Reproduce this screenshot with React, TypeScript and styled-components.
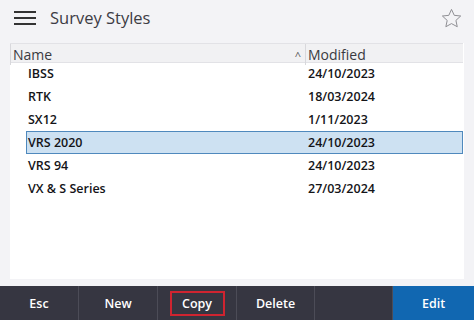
import React from 'react';
import styled, { createGlobalStyle } from 'styled-components';

const rows = [
  { name: 'IBSS', modified: '24/10/2023' },
  { name: 'RTK', modified: '18/03/2024' },
  { name: 'SX12', modified: '1/11/2023' },
  { name: 'VRS 2020', modified: '24/10/2023', selected: true },
  { name: 'VRS 94', modified: '24/10/2023' },
  { name: 'VX & S Series', modified: '27/03/2024' },
];

const buttons = [
  { label: 'Esc' },
  { label: 'New' },
  { label: 'Copy', outlined: true },
  { label: 'Delete' },
  { label: '' },
  { label: 'Edit', primary: true },
];

const App = () => {
  return (
    <>
      <GlobalStyle />
      <Screen>
        <TopBar>
          <MenuButton>
            <svg width="22" height="14" viewBox="0 0 22 14">
              <path d="M0 1h22M0 7h22M0 13h22" stroke="#333" strokeWidth="2" />
            </svg>
          </MenuButton>
          <Title>Survey Styles</Title>
          <StarButton>
            <svg width="23" height="23" viewBox="0 0 24 24" fill="none">
              <path
                d="M12 2.5l2.9 6.2 6.7.7-5 4.6 1.4 6.6L12 17.3l-5.9 3.3 1.4-6.6-5-4.6 6.7-.7z"
                stroke="#8a8a8f"
                strokeWidth="1"
                strokeLinejoin="round"
              />
            </svg>
          </StarButton>
        </TopBar>
        <Table>
          <HeadRow>
            <HeadCell>
              Name
              <Caret>^</Caret>
            </HeadCell>
            <HeadCell>Modified</HeadCell>
          </HeadRow>
          {rows.map((r) => (
            <Row key={r.name} $selected={r.selected}>
              <NameCell>{r.name}</NameCell>
              <DateCell>{r.modified}</DateCell>
            </Row>
          ))}
        </Table>
        <BottomBar>
          {buttons.map((b, i) => (
            <SoftKey key={i} $primary={b.primary}>
              {b.outlined ? <Outline>{b.label}</Outline> : b.label}
            </SoftKey>
          ))}
        </BottomBar>
      </Screen>
    </>
  );
};

export default App;

const GlobalStyle = createGlobalStyle`
  html, body {
    margin: 0;
    padding: 0;
    background: #f3f3f6;
  }
  body {
    font-family: "Open Sans", "Noto Sans", sans-serif;
  }
`;

const Screen = styled.div`
  width: 474px;
  height: 320px;
  display: flex;
  flex-direction: column;
  background: #f3f3f6;
  overflow: hidden;
`;

const TopBar = styled.div`
  height: 38px;
  display: flex;
  align-items: center;
  padding: 0 11px 0 14px;
  box-sizing: border-box;
`;

const MenuButton = styled.div`
  width: 22px;
  height: 14px;
  display: flex;
  margin-top: -2px;
`;

const Title = styled.div`
  margin-left: 14px;
  font-size: 16.5px;
  color: #3c3c44;
  flex: 1;
  margin-top: -3px;
`;

const StarButton = styled.div`
  display: flex;
  margin-top: -2px;
`;

const Table = styled.div`
  margin: 5px 10px 0 10px;
  height: 236px;
  background: #ffffff;
  display: flex;
  flex-direction: column;
`;

const HeadRow = styled.div`
  display: grid;
  grid-template-columns: 295px 1fr;
  height: 20px;
  background: #f1f1f3;
  border-top: 1px solid #e2e2e6;
  border-bottom: 1px solid #e2e2e6;
  box-sizing: border-box;
  margin-right: 1px;
  margin-bottom: -1px;
`;

const HeadCell = styled.div`
  display: flex;
  align-items: center;
  justify-content: space-between;
  padding-left: 2px;
  font-size: 14px;
  color: #3a3a40;
  border-left: 1px solid #d8d8dc;
  line-height: 18px;
`;

const Caret = styled.span`
  font-size: 11px;
  color: #555;
  margin-right: 4px;
  margin-top: 3px;
`;

const Row = styled.div<{ $selected?: boolean }>`
  display: grid;
  grid-template-columns: 280px 1fr;
  height: 23px;
  align-items: center;
  margin-left: 16px;
  margin-right: 1px;
  box-sizing: border-box;
  font-size: 12.5px;
  font-weight: 600;
  color: #141418;
  background: ${(p) => (p.$selected ? '#cde1f2' : 'transparent')};
  border: 1px solid ${(p) => (p.$selected ? '#4f89bd' : 'transparent')};
  padding-left: 1px;
`;

const NameCell = styled.div``;

const DateCell = styled.div``;

const BottomBar = styled.div`
  margin-top: auto;
  height: 34px;
  display: grid;
  grid-template-columns: 79px 79px 79px 78px 78px 1fr;
  background: #363641;
`;

const SoftKey = styled.div<{ $primary?: boolean }>`
  display: flex;
  align-items: center;
  justify-content: center;
  color: #ffffff;
  font-size: 12.5px;
  font-weight: 600;
  background: ${(p) => (p.$primary ? '#1167b1' : 'transparent')};
  border-right: ${(p) => (p.$primary ? 'none' : '1px solid #4c4c57')};
`;

const Outline = styled.span`
  display: flex;
  align-items: center;
  justify-content: center;
  width: 51px;
  height: 21px;
  border: 2px solid #cf2430;
`;
